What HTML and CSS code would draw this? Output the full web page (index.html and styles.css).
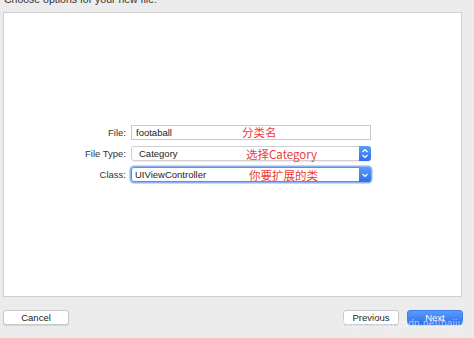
FILE: index.html
```html
<!DOCTYPE html>
<html>
<head>
<meta charset="utf-8">
<link rel="stylesheet" href="styles.css">
</head>
<body>
<div class="title">Choose options for your new file:</div>
<div class="panel">
  <div class="form">
    <div class="label">File:</div>
    <div class="field text">footaball<span class="note">分类名</span></div>
    <div class="label">File Type:</div>
    <div class="field popup">Category<span class="note n2">选择Category</span>
      <span class="stepper"><svg width="8" height="11" viewBox="0 0 8 11"><path d="M1.5 4 L4 1.5 L6.5 4 M1.5 7 L4 9.5 L6.5 7" fill="none" stroke="#fff" stroke-width="1.2"/></svg></span>
    </div>
    <div class="label">Class:</div>
    <div class="field combo">UIViewController<span class="note n3">你要扩展的类</span>
      <span class="stepper s2"><svg width="8" height="8" viewBox="0 0 8 8"><path d="M1.5 3 L4 5.5 L6.5 3" fill="none" stroke="#fff" stroke-width="1.2"/></svg></span>
    </div>
  </div>
</div>
<div class="footer">
  <button class="btn cancel">Cancel</button>
  <div class="right">
    <button class="btn prev">Previous</button>
    <button class="btn next">Next</button>
  </div>
  <div class="wm">https://blog.csdn.net/baiju</div>
</div>
</body>
</html>
```
FILE: styles.css
```css
html, body {
  margin: 0;
  padding: 0;
}
body {
  width: 474px;
  height: 338px;
  background: #ececec;
  font-family: "Liberation Sans", Arial, sans-serif;
  color: #222;
  overflow: hidden;
  position: relative;
}
.title {
  font-size: 10.5px;
  line-height: 12px;
  margin-top: -7px;
  padding-left: 4px;
  color: #333;
  height: 12px;
}
.panel {
  margin: 7px 0 0 3px;
  width: 457px;
  height: 283px;
  background: #fff;
  border: 1px solid #cfcfcf;
}
.form {
  display: grid;
  grid-template-columns: 122px 240px;
  grid-auto-rows: 15px;
  column-gap: 5px;
  row-gap: 6px;
  padding-top: 112px;
  align-items: center;
}
.label {
  text-align: right;
  font-size: 9.5px;
  color: #333;
}
.field {
  position: relative;
  height: 15px;
  box-sizing: border-box;
  font-size: 9.5px;
  line-height: 13px;
  padding-left: 4px;
  color: #222;
}
.text {
  border: 1px solid #c8c8c8;
}
.popup {
  border: 1px solid #d0d0d0;
  border-radius: 3px;
  padding-left: 7px;
  box-shadow: 0 1px 1px rgba(0,0,0,0.08);
}
.combo {
  border: 1px solid #5b8ee8;
  border-radius: 3px;
  box-shadow: 0 0 0 1.5px #8fb3f2;
  padding-left: 3px;
}
.note {
  position: absolute;
  top: -1px;
  font-family: "Noto Sans CJK SC", "Liberation Sans", sans-serif;
  font-size: 11.5px;
  line-height: 15px;
  color: #ec3b3b;
  left: 110px;
}
.n2 { left: 114px; top: 0; }
.n3 { left: 117px; top: 0; }
.stepper {
  position: absolute;
  right: -1px;
  top: -1px;
  width: 12px;
  height: 15px;
  background: linear-gradient(#5c9cf7, #2f6fe8);
  border-radius: 0 3px 3px 0;
  display: flex;
  align-items: center;
  justify-content: center;
}
.footer {
  position: relative;
  display: flex;
  justify-content: space-between;
  padding: 13px 11px 0 3px;
}
.right {
  display: flex;
  gap: 8px;
}
.btn {
  height: 15px;
  padding: 0;
  font-family: "Liberation Sans", Arial, sans-serif;
  font-size: 9.5px;
  line-height: 13px;
  border-radius: 3px;
  border: 1px solid #c9c9c9;
  background: #fff;
  color: #222;
  box-shadow: 0 1px 1px rgba(0,0,0,0.1);
}
.cancel { width: 66px; }
.prev { width: 56px; }
.next {
  width: 56px;
  background: linear-gradient(#5a9bf8, #2e6ff0);
  border-color: #3d7ef0;
  color: #fff;
}
.wm {
  position: absolute;
  left: 342px;
  top: 21px;
  font-size: 10px;
  color: rgba(255,255,255,0.6);
  letter-spacing: 0.3px;
  white-space: nowrap;
}
```
